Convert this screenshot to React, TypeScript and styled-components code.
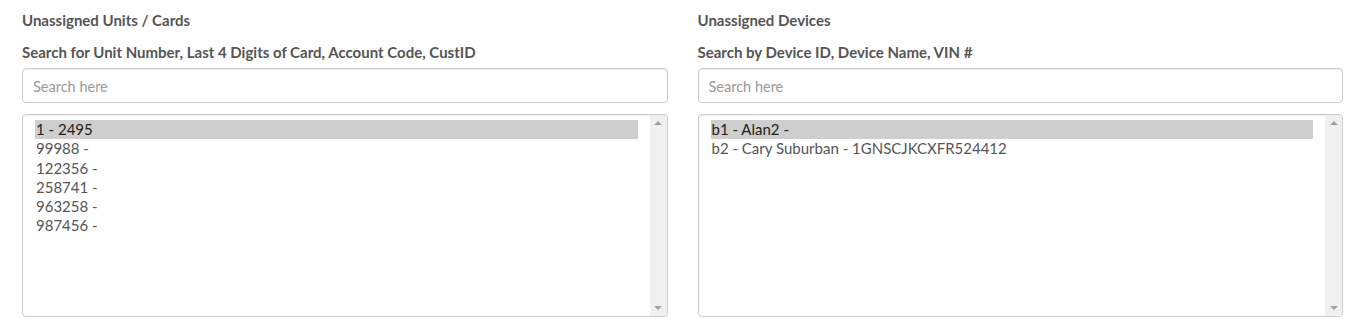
import styled, { createGlobalStyle } from "styled-components";

const GlobalStyle = createGlobalStyle`
  body {
    margin: 0;
    background: #fff;
    font-family: Lato, "Open Sans", sans-serif;
  }
`;

const Page = styled.div`
  display: grid;
  grid-template-columns: 1fr 1fr;
  column-gap: 30px;
  padding: 11px 19px 0 22px;
`;

const Column = styled.div`
  display: flex;
  flex-direction: column;
`;

const Title = styled.div`
  font-size: 15px;
  font-weight: 700;
  color: #555;
  line-height: 18px;
  margin-bottom: 14px;
`;

const Label = styled.div`
  font-size: 15px;
  font-weight: 700;
  color: #555;
  line-height: 18px;
  margin-bottom: 7px;
`;

const SearchInput = styled.input`
  box-sizing: border-box;
  height: 35px;
  width: 100%;
  padding: 7px 10px 6px;
  border: 1px solid #ccc;
  border-radius: 4px;
  box-shadow: inset 0 1px 1px rgba(0, 0, 0, 0.075);
  font-family: inherit;
  font-size: 14.5px;
  color: #555;
  outline: none;
  &::placeholder {
    color: #999;
  }
`;

const ListBox = styled.div`
  box-sizing: border-box;
  margin-top: 11px;
  height: 203px;
  display: flex;
  border: 1px solid #ccc;
  border-radius: 4px;
  box-shadow: inset 0 1px 1px rgba(0, 0, 0, 0.075);
  overflow: hidden;
`;

const Options = styled.div`
  flex: 1;
  padding: 5px 12px 5px 12px;
`;

const Option = styled.div<{ $selected?: boolean }>`
  font-size: 15px;
  line-height: 19.3px;
  padding-left: 1px;
  color: ${(p) => (p.$selected ? "#222" : "#555")};
  background: ${(p) => (p.$selected ? "#cecece" : "transparent")};
`;

const ScrollTrack = styled.div`
  width: 17px;
  background: #f0f0f0;
  display: flex;
  flex-direction: column;
  justify-content: space-between;
  align-items: center;
  padding: 6px 0;
`;

const Arrow = styled.div<{ $down?: boolean }>`
  width: 0;
  height: 0;
  border-left: 4px solid transparent;
  border-right: 4px solid transparent;
  ${(p) =>
    p.$down
      ? "border-top: 4px solid #a3a3a3;"
      : "border-bottom: 4px solid #a3a3a3;"}
`;

type PanelProps = {
  title: string;
  label: string;
  items: string[];
};

const Panel = ({ title, label, items }: PanelProps) => (
  <Column>
    <Title>{title}</Title>
    <Label>{label}</Label>
    <SearchInput placeholder="Search here" />
    <ListBox>
      <Options>
        {items.map((item, i) => (
          <Option key={item} $selected={i === 0}>
            {item}
          </Option>
        ))}
      </Options>
      <ScrollTrack>
        <Arrow />
        <Arrow $down />
      </ScrollTrack>
    </ListBox>
  </Column>
);

export default function App() {
  return (
    <>
      <GlobalStyle />
      <Page>
        <Panel
          title="Unassigned Units / Cards"
          label="Search for Unit Number, Last 4 Digits of Card, Account Code, CustID"
          items={["1 - 2495", "99988 -", "122356 -", "258741 -", "963258 -", "987456 -"]}
        />
        <Panel
          title="Unassigned Devices"
          label="Search by Device ID, Device Name, VIN #"
          items={["b1 - Alan2 -", "b2 - Cary Suburban - 1GNSCJKCXFR524412"]}
        />
      </Page>
    </>
  );
}
